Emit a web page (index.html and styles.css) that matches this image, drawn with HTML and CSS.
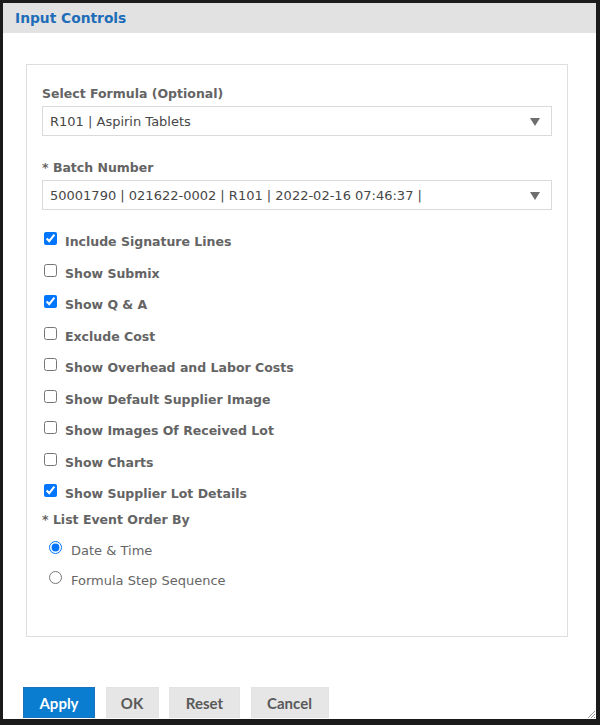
FILE: index.html
```html
<!DOCTYPE html>
<html>
<head>
<meta charset="utf-8">
<link rel="stylesheet" href="styles.css">
</head>
<body>
<div class="window">
  <div class="header"><span class="title">Input Controls</span></div>
  <div class="content">
    <div class="panel">
      <div class="label">Select Formula (Optional)</div>
      <div class="select"><span class="value">R101 | Aspirin Tablets</span><span class="arrow"></span></div>
      <div class="label label-gap">* Batch Number</div>
      <div class="select"><span class="value">50001790 | 021622-0002 | R101 | 2022-02-16 07:46:37 |</span><span class="arrow"></span></div>
      <div class="checks">
        <label class="check"><input type="checkbox" checked><span>Include Signature Lines</span></label>
        <label class="check"><input type="checkbox"><span>Show Submix</span></label>
        <label class="check"><input type="checkbox" checked><span>Show Q &amp; A</span></label>
        <label class="check"><input type="checkbox"><span>Exclude Cost</span></label>
        <label class="check"><input type="checkbox"><span>Show Overhead and Labor Costs</span></label>
        <label class="check"><input type="checkbox"><span>Show Default Supplier Image</span></label>
        <label class="check"><input type="checkbox"><span>Show Images Of Received Lot</span></label>
        <label class="check"><input type="checkbox"><span>Show Charts</span></label>
        <label class="check"><input type="checkbox" checked><span>Show Supplier Lot Details</span></label>
      </div>
      <div class="label order-label">* List Event Order By</div>
      <div class="radios">
        <label class="radio"><input type="radio" name="order" checked><span>Date &amp; Time</span></label>
        <label class="radio"><input type="radio" name="order"><span>Formula Step Sequence</span></label>
      </div>
    </div>
  </div>
  <div class="footer">
    <button class="btn btn-primary btn-apply">Apply</button>
    <button class="btn btn-ok">OK</button>
    <button class="btn btn-reset">Reset</button>
    <button class="btn btn-cancel">Cancel</button>
  </div>
  <svg class="grip" width="9" height="9" viewBox="0 0 9 9">
    <path d="M8 1 L1 8 M8 4 L4 8 M8 7 L7 8" stroke="#9a9a9a" stroke-width="1" fill="none"/>
  </svg>
</div>
</body>
</html>
```

FILE: styles.css
```css
* { box-sizing: border-box; }
html, body { margin: 0; padding: 0; background: #fff; }
body { font-family: "DejaVu Sans", sans-serif; }

.window {
  position: relative;
  width: 600px;
  height: 725px;
  border-style: solid;
  border-color: #1b1b1b;
  border-width: 3px 4px 6px 3px;
  display: flex;
  flex-direction: column;
  background: #fff;
}

.header {
  height: 30px;
  background: #e2e2e2;
  padding-left: 12px;
  display: flex;
  align-items: center;
}
.title {
  font-weight: bold;
  font-size: 13.8px;
  color: #1d6db8;
}

.content {
  padding: 31px 28px 0 23px;
}

.panel {
  height: 573px;
  border: 1px solid #dedede;
  padding: 20px 15px 0 15px;
}

.label {
  font-weight: bold;
  font-size: 12.5px;
  line-height: 17px;
  color: #646464;
  margin-bottom: 4px;
}
.label-gap { margin-top: 23px; }

.select {
  height: 30px;
  border: 1px solid #dadada;
  display: flex;
  align-items: center;
  justify-content: space-between;
  padding: 0 11px 0 7px;
}
.value {
  font-size: 13px;
  color: #474747;
}
.arrow {
  width: 0;
  height: 0;
  border-left: 5.5px solid transparent;
  border-right: 5.5px solid transparent;
  border-top: 8px solid #6e6e6e;
  margin-top: 1px;
}

.checks {
  margin-top: 16px;
  display: flex;
  flex-direction: column;
}
.check {
  height: 31.5px;
  display: flex;
  align-items: center;
  font-weight: bold;
  font-size: 12.5px;
  color: #646464;
}
.check input {
  width: 13px;
  height: 13px;
  margin: 0 8px 0 2px;
  position: relative;
  top: -3px;
}

.order-label { margin-top: 1px; }

.radios {
  display: flex;
  flex-direction: column;
  margin-top: 8px;
}
.radio {
  height: 30px;
  display: flex;
  align-items: center;
  font-size: 13px;
  color: #666;
}
.radio input {
  width: 13px;
  height: 13px;
  margin: 0 9px 0 7px;
  position: relative;
  top: -3px;
}

.footer {
  margin-top: 50px;
  padding-left: 20px;
  display: flex;
  gap: 10.5px;
}
.btn {
  height: 31px;
  border: 1px solid #e3e3e3;
  background: #e6e6e6;
  color: #595959;
  font-family: Lato, "Open Sans", sans-serif;
  font-weight: bold;
  font-size: 15px;
  padding: 0;
  border-radius: 0;
}
.btn-apply { width: 72px; }
.btn-ok { width: 53px; }
.btn-reset { width: 71px; }
.btn-cancel { width: 78px; }
.btn-primary {
  background: #0a7dd0;
  border-color: #1a74bd;
  color: #fff;
}

.grip {
  position: absolute;
  right: 0;
  bottom: 0;
}
```
